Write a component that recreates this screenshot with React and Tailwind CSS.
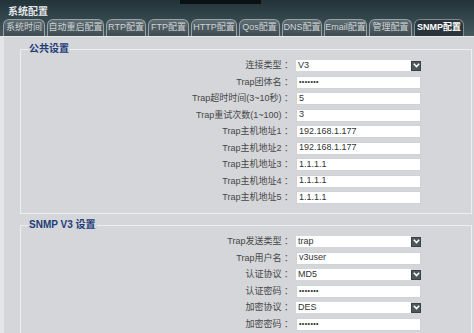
import React from "react";

const tabs = [
  { name: "系统时间", w: "w-[42px]" },
  { name: "自动重启配置", w: "w-[57px]" },
  { name: "RTP配置", w: "w-[40px]" },
  { name: "FTP配置", w: "w-[41px]" },
  { name: "HTTP配置", w: "w-[46px]" },
  { name: "Qos配置", w: "w-[41px]" },
  { name: "DNS配置", w: "w-[40px]" },
  { name: "Email配置", w: "w-[43px]" },
  { name: "管理配置", w: "w-[43px]" },
  { name: "SNMP配置", w: "w-[50px]", active: true },
];

const common = [
  { label: "连接类型", value: "V3", select: true },
  { label: "Trap团体名", value: "•••••••", pwd: true },
  { label: "Trap超时时间(3~10秒)", value: "5" },
  { label: "Trap重试次数(1~100)", value: "3" },
  { label: "Trap主机地址1", value: "192.168.1.177" },
  { label: "Trap主机地址2", value: "192.168.1.177" },
  { label: "Trap主机地址3", value: "1.1.1.1" },
  { label: "Trap主机地址4", value: "1.1.1.1" },
  { label: "Trap主机地址5", value: "1.1.1.1" },
];

const v3 = [
  { label: "Trap发送类型", value: "trap", select: true },
  { label: "Trap用户名", value: "v3user" },
  { label: "认证协议", value: "MD5", select: true },
  { label: "认证密码", value: "•••••••", pwd: true },
  { label: "加密协议", value: "DES", select: true },
  { label: "加密密码", value: "•••••••", pwd: true },
];

const Arrow = () => (
  <div className="w-[10px] h-[10px] bg-[#4e575b] border border-[#3a4245] flex items-center justify-center">
    <svg width="7" height="5" viewBox="0 0 7 5">
      <path d="M0.8 0.8 L3.5 3.6 L6.2 0.8" fill="none" stroke="#ffffff" strokeWidth="1.6" />
    </svg>
  </div>
);

const Row = ({ item }) => (
  <div className="flex items-center h-[13px]">
    <div className="w-[272px] text-right whitespace-nowrap text-[9px] leading-[13px] text-[#474747]">
      {item.label} ：
    </div>
    {item.select ? (
      <div className="ml-[3px] flex items-center w-[125px]">
        <div className="w-[115px] h-[11px] bg-white flex items-center pl-[2px] text-[9px] text-[#333]">
          {item.value}
        </div>
        <Arrow />
      </div>
    ) : (
      <div className="ml-[3px] w-[125px] h-[13px] bg-white border border-[#cfd2d6] flex items-center pl-[2px] text-[#333]">
        <span className={item.pwd ? "text-[7px] tracking-[0.4px] font-bold" : "text-[9px]"}>{item.value}</span>
      </div>
    )}
  </div>
);

const Group = ({ title, items }) => (
  <fieldset className="border border-[#eceef0] ml-[16px] mr-[2px] pb-[9px]">
    <legend className="ml-[7px] px-[1px] text-[10px] leading-[14px] font-bold text-[#1e3c78]">{title}</legend>
    <div className="flex flex-col gap-[3.5px] pt-[3px]">
      {items.map((it) => (
        <Row key={it.label} item={it} />
      ))}
    </div>
  </fieldset>
);

export default function App() {
  return (
    <div
      className="w-[474px] h-[333px] overflow-hidden bg-[#d4d6d9] flex flex-col"
      style={{ fontFamily: '"Liberation Sans", "Noto Sans CJK SC", sans-serif' }}
    >
      <div className="bg-gradient-to-b from-[#22343a] to-[#46595f] border-b border-[#e6e8ea]">
        <div className="flex h-[4px]">
          <div className="w-[180px]" />
          <div className="w-[81px] bg-[#0b1012]" />
        </div>
        <div className="h-[15px] pl-[8px] flex items-center text-[10px] font-bold text-[#e4e8ea]">系统配置</div>
        <div className="flex items-end gap-[2px] pl-[3px] h-[17px]">
          {tabs.map((t) =>
            t.active ? (
              <div
                key={t.name}
                className={`${t.w} h-[17px] rounded-t-[6px] border border-b-0 border-[#7e8c91] bg-[#29353a] text-white font-bold text-[9px] flex items-center justify-center whitespace-nowrap`}
              >
                {t.name}
              </div>
            ) : (
              <div
                key={t.name}
                className={`${t.w} h-[17px] rounded-t-[6px] border border-b-0 border-[#95a2a7] bg-gradient-to-b from-[#5e6c71] to-[#3f4c51] text-[#cdd3d6] text-[9px] flex items-center justify-center whitespace-nowrap`}
              >
                {t.name}
              </div>
            )
          )}
        </div>
      </div>
      <div className="flex flex-1">
        <div className="w-[4px] bg-[#e3e5e8]" />
        <div className="flex-1 flex flex-col pt-[5px] gap-[4px]">
          <Group title="公共设置" items={common} />
          <Group title="SNMP V3 设置" items={v3} />
        </div>
      </div>
    </div>
  );
}
